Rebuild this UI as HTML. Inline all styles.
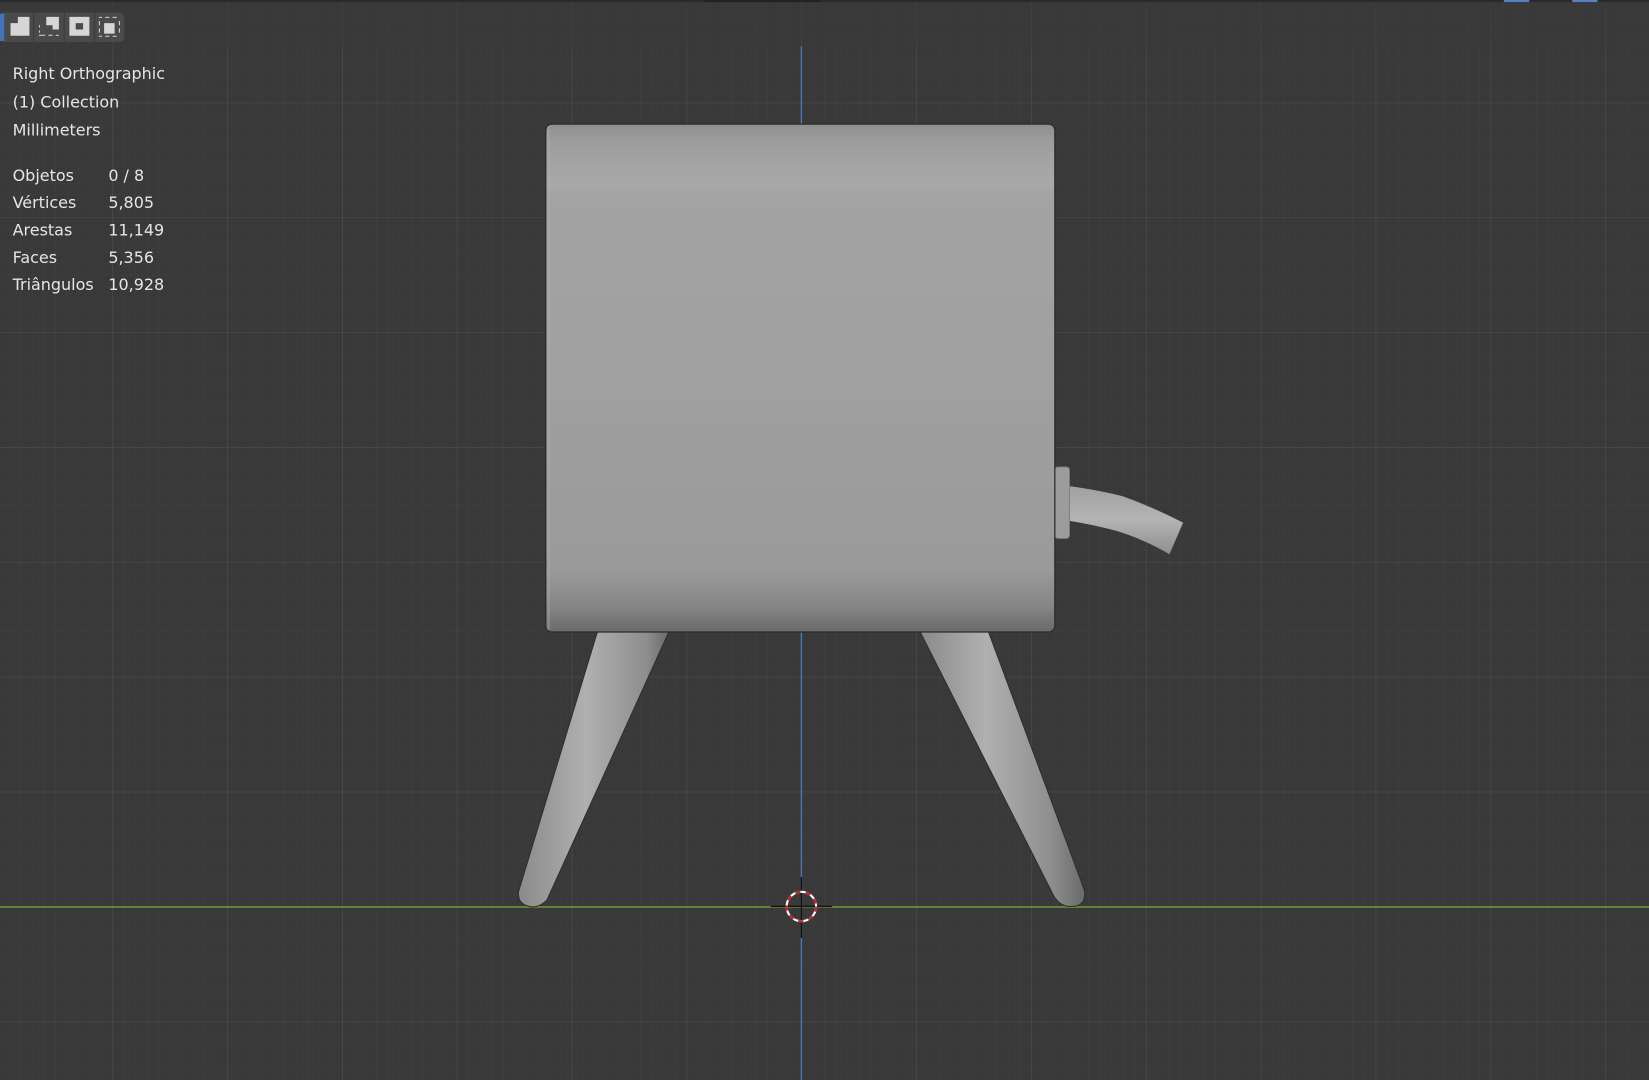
<!DOCTYPE html>
<html><head><meta charset="utf-8">
<style>
html,body{margin:0;padding:0;background:#393939;overflow:hidden}
svg{display:block}
text{font-family:"DejaVu Sans","Liberation Sans",sans-serif;fill:#e6e6e6;font-size:15.2px}
</style></head>
<body>
<svg width="1649" height="1080" viewBox="0 0 1568 1027" preserveAspectRatio="none" xmlns="http://www.w3.org/2000/svg">
<defs>
<pattern id="minor" width="10.92" height="10.92" patternUnits="userSpaceOnUse" x="762" y="862">
<path d="M0 0H10.92M0 0V10.92" stroke="#3f3f3f" stroke-width="1" fill="none"/>
</pattern>
<pattern id="major" width="109.2" height="109.2" patternUnits="userSpaceOnUse" x="762" y="862">
<path d="M0 0H109.2M0 0V109.2" stroke="#4c4c4c" stroke-width="1.2" fill="none"/>
</pattern>
<linearGradient id="box" x1="0" y1="0" x2="0" y2="1">
<stop offset="0" stop-color="#8f8f8f"/>
<stop offset="0.04" stop-color="#9e9e9e"/>
<stop offset="0.12" stop-color="#a9a9a9"/>
<stop offset="0.14" stop-color="#a3a3a3"/>
<stop offset="0.5" stop-color="#a0a0a0"/>
<stop offset="0.88" stop-color="#9a9a9a"/>
<stop offset="0.95" stop-color="#858585"/>
<stop offset="1" stop-color="#6a6a6a"/>
</linearGradient>
<linearGradient id="legL" x1="0" y1="0" x2="1" y2="0">
<stop offset="0" stop-color="#8a8a8a"/><stop offset="0.45" stop-color="#b0b0b0"/><stop offset="0.85" stop-color="#8e8e8e"/><stop offset="1" stop-color="#6a6a6a"/>
</linearGradient>
<linearGradient id="legR" x1="0" y1="0" x2="1" y2="0">
<stop offset="0" stop-color="#8a8a8a"/><stop offset="0.4" stop-color="#b0b0b0"/><stop offset="0.8" stop-color="#8e8e8e"/><stop offset="1" stop-color="#6a6a6a"/>
</linearGradient>
<linearGradient id="cord" x1="0" y1="0" x2="0" y2="1">
<stop offset="0" stop-color="#a0a0a0"/><stop offset="0.5" stop-color="#b4b4b4"/><stop offset="1" stop-color="#8e8e8e"/>
</linearGradient>
</defs>
<rect width="1568" height="1027" fill="#393939"/>
<rect width="1568" height="1027" fill="url(#minor)"/>
<rect width="1568" height="1027" fill="url(#major)"/>
<rect width="1568" height="44" fill="#3a3a3a" opacity="0.55"/>
<rect x="0" y="0" width="1568" height="2" fill="#2a2a2a"/>
<rect x="670" y="0" width="110" height="2" fill="#222"/>
<rect x="1430" y="0" width="24" height="2" fill="#5680c2"/>
<rect x="1495" y="0" width="24" height="2" fill="#5680c2"/>
<line x1="762" y1="44" x2="762" y2="1027" stroke="#4a78b5" stroke-width="1.3"/>
<line x1="0" y1="862.5" x2="1568" y2="862.5" stroke="#6f9a35" stroke-width="1.5"/>
<path d="M568 601 L636 601 L520 856 Q512 864 504 862 Q492 860 493 848 Z" fill="url(#legL)" stroke="#2e2e2e" stroke-width="1"/>
<path d="M875 601 L940 601 L1031 846 Q1034 862 1018 862 Q1008 862 1002 852 Z" fill="url(#legR)" stroke="#2e2e2e" stroke-width="1"/>
<path d="M1015 462 Q1045 466 1068 472 Q1098 483 1125 497 L1112 527 Q1088 513 1062 505 Q1040 499 1015 495 Z" fill="url(#cord)"/>
<rect x="1003" y="444" width="14" height="68" rx="3" fill="#9c9c9c" stroke="#7a7a7a" stroke-width="0.8"/>
<rect x="519" y="118" width="484" height="483" rx="6" fill="url(#box)" stroke="#2c2c2c" stroke-width="1.2"/>
<rect x="520" y="120" width="3" height="479" fill="#b0b0b0" opacity="0.35"/>
<line x1="762" y1="834" x2="762" y2="892" stroke="#111" stroke-width="1.3"/>
<line x1="733" y1="862" x2="791" y2="862" stroke="#111" stroke-width="1.3"/>
<circle cx="762" cy="862" r="14" fill="none" stroke="#fff" stroke-width="2"/>
<circle cx="762" cy="862" r="14" fill="none" stroke="#c8202a" stroke-width="2" stroke-dasharray="5 5"/>
<rect x="0" y="12" width="118" height="28" rx="4" fill="#4a4a4a"/>
<rect x="0" y="13" width="4" height="26" fill="#4772b3"/>
<g fill="#d6d6d6">
<path d="M10 22h7v-6h11v18h-18z"/>
<path d="M44 16h12v12h-6v-4h-6z"/>
<path d="M37 24h1v2h-1zM37 29h1v2h-1zM37 33h6v1h-6zM46 33h4v1h-4zM53 33h3v1h-3z"/>
<path d="M66 16h19v18h-19zM72 22v6h7v-6z"/>
<path d="M99 22h10v10h-10z"/>
<path d="M94 16h3v1h-3zM100 16h4v1h-4zM107 16h4v1h-4zM94 20h1v4h-1zM94 27h1v4h-1zM113 20h1v4h-1zM113 27h1v4h-1zM94 34h3v1h-3zM100 34h4v1h-4zM107 34h4v1h-4z"/>
</g>
<line x1="32" y1="12" x2="32" y2="40" stroke="#3a3a3a"/>
<line x1="61" y1="12" x2="61" y2="40" stroke="#3a3a3a"/>
<line x1="90" y1="12" x2="90" y2="40" stroke="#3a3a3a"/>
<text x="12" y="75">Right Orthographic</text>
<text x="12" y="102">(1) Collection</text>
<text x="12" y="129">Millimeters</text>
<text x="12" y="172">Objetos</text><text x="103" y="172">0 / 8</text>
<text x="12" y="198">Vértices</text><text x="103" y="198">5,805</text>
<text x="12" y="224">Arestas</text><text x="103" y="224">11,149</text>
<text x="12" y="250">Faces</text><text x="103" y="250">5,356</text>
<text x="12" y="276">Triângulos</text><text x="103" y="276">10,928</text>
</svg>
</body></html>
